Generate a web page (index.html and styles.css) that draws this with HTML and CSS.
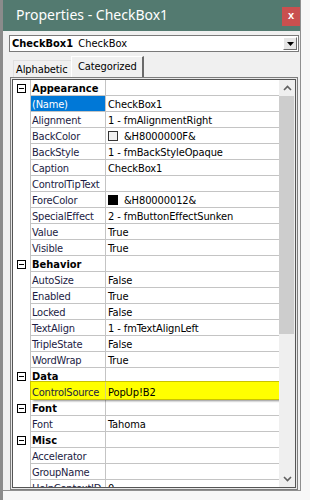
FILE: index.html
```html
<!DOCTYPE html>
<html>
<head>
<meta charset="utf-8">
<link rel="stylesheet" href="styles.css">
</head>
<body>
<div class="win">
  <div class="title">
    <span class="ttext">Properties - CheckBox1</span>
    <span class="close">x</span>
  </div>
  <div class="combo">
    <span class="cbtext"><b>CheckBox1</b> CheckBox</span>
    <span class="cbtn"><svg width="7" height="4" viewBox="0 0 7 4"><path d="M0 0H7L3.5 4Z" fill="#000"/></svg></span>
  </div>
  <div class="tabs">
    <span class="tab">Alphabetic</span>
    <span class="tab sel">Categorized</span>
  </div>
  <div class="panel">
    <div class="pin">
      <div class="grid">
        <div class="row cat"><span class="gut"><i class="minus"></i></span><span class="name">Appearance</span><span class="val"></span></div>
        <div class="row"><span class="gut"></span><span class="name selname">(Name)</span><span class="val">CheckBox1</span></div>
        <div class="row"><span class="gut"></span><span class="name">Alignment</span><span class="val">1 - fmAlignmentRight</span></div>
        <div class="row"><span class="gut"></span><span class="name">BackColor</span><span class="val"><i class="sw light"></i>&amp;H8000000F&amp;</span></div>
        <div class="row"><span class="gut"></span><span class="name">BackStyle</span><span class="val">1 - fmBackStyleOpaque</span></div>
        <div class="row"><span class="gut"></span><span class="name">Caption</span><span class="val">CheckBox1</span></div>
        <div class="row"><span class="gut"></span><span class="name">ControlTipText</span><span class="val"></span></div>
        <div class="row"><span class="gut"></span><span class="name">ForeColor</span><span class="val"><i class="sw dark"></i>&amp;H80000012&amp;</span></div>
        <div class="row"><span class="gut"></span><span class="name">SpecialEffect</span><span class="val">2 - fmButtonEffectSunken</span></div>
        <div class="row"><span class="gut"></span><span class="name">Value</span><span class="val">True</span></div>
        <div class="row"><span class="gut"></span><span class="name">Visible</span><span class="val">True</span></div>
        <div class="row cat"><span class="gut"><i class="minus"></i></span><span class="name">Behavior</span><span class="val"></span></div>
        <div class="row"><span class="gut"></span><span class="name">AutoSize</span><span class="val">False</span></div>
        <div class="row"><span class="gut"></span><span class="name">Enabled</span><span class="val">True</span></div>
        <div class="row"><span class="gut"></span><span class="name">Locked</span><span class="val">False</span></div>
        <div class="row"><span class="gut"></span><span class="name">TextAlign</span><span class="val">1 - fmTextAlignLeft</span></div>
        <div class="row"><span class="gut"></span><span class="name">TripleState</span><span class="val">False</span></div>
        <div class="row"><span class="gut"></span><span class="name">WordWrap</span><span class="val">True</span></div>
        <div class="row cat"><span class="gut"><i class="minus"></i></span><span class="name">Data</span><span class="val"></span></div>
        <div class="row"><span class="gut"></span><span class="hl"><span class="name">ControlSource</span><span class="val">PopUp!B2</span></span></div>
        <div class="row cat"><span class="gut"><i class="minus"></i></span><span class="name">Font</span><span class="val"></span></div>
        <div class="row"><span class="gut"></span><span class="name">Font</span><span class="val">Tahoma</span></div>
        <div class="row cat"><span class="gut"><i class="minus"></i></span><span class="name">Misc</span><span class="val"></span></div>
        <div class="row"><span class="gut"></span><span class="name">Accelerator</span><span class="val"></span></div>
        <div class="row"><span class="gut"></span><span class="name">GroupName</span><span class="val"></span></div>
        <div class="row"><span class="gut"></span><span class="name">HelpContextID</span><span class="val">0</span></div>
      </div>
      <div class="sb">
        <span class="sbbtn"><svg width="9" height="6" viewBox="0 0 9 6"><path d="M1 5L4.5 1.5L8 5" fill="none" stroke="#606060" stroke-width="1.6"/></svg></span>
        <span class="thumb"></span>
        <span class="sbfill"></span>
        <span class="sbbtn"><svg width="9" height="6" viewBox="0 0 9 6"><path d="M1 1L4.5 4.5L8 1" fill="none" stroke="#606060" stroke-width="1.6"/></svg></span>
      </div>
    </div>
  </div>
</div>
</body>
</html>
```
FILE: styles.css
```css
html, body {
  margin: 0;
  padding: 0;
}
body {
  background: #f7f7f7;
  border-left: 3px solid #8b8b8b;
  height: 500px;
  box-sizing: border-box;
  overflow: hidden;
  font-family: "DejaVu Sans Condensed", "Liberation Sans", sans-serif;
  font-size: 11px;
}
.win {
  width: 298px;
  height: 491px;
  box-sizing: border-box;
  background: #f0f0f0;
  border-right: 1px solid #8f8f8f;
  border-bottom: 1px solid #8f8f8f;
  display: flex;
  flex-direction: column;
}
.title {
  height: 31px;
  flex: none;
  background: #537a70;
  color: #fff;
  display: flex;
  justify-content: space-between;
  align-items: flex-start;
  padding-left: 13px;
  box-sizing: border-box;
}
.ttext {
  font-family: "Noto Sans", sans-serif;
  font-size: 14px;
  line-height: 18px;
  margin-top: 6px;
}
.close {
  width: 18px;
  height: 19px;
  margin-top: 7px;
  background: #c9504f;
  color: #fff;
  font-family: "Liberation Sans", sans-serif;
  font-weight: bold;
  font-size: 11px;
  line-height: 17px;
  text-align: center;
}
.combo {
  flex: none;
  margin: 4px 0 0 6px;
  width: 290px;
  height: 17px;
  box-sizing: border-box;
  border: 1px solid #7a7a7a;
  background: #fff;
  display: flex;
  align-items: center;
  color: #000;
}
.cbtext {
  padding-left: 2px;
  font-size: 11px;
  line-height: 15px;
}
.cbtext b {
  margin-right: 2px;
}
.cbtn {
  margin-left: auto;
  margin-right: 1px;
  width: 14px;
  height: 13px;
  box-sizing: border-box;
  background: #e6e6e6;
  border-top: 1px solid #fff;
  border-left: 1px solid #fff;
  border-right: 1px solid #6d6d6d;
  border-bottom: 1px solid #6d6d6d;
  display: flex;
  align-items: center;
  justify-content: center;
}
.tabs {
  flex: none;
  height: 25px;
  display: flex;
  align-items: flex-end;
  padding-left: 10px;
}
.tab {
  height: 17px;
  box-sizing: border-box;
  border-top: 1px solid #e0e0e0;
  border-left: 1px solid #e0e0e0;
  padding: 1px 0 0 2px;
  width: 58px;
  line-height: 15px;
  color: #000;
  letter-spacing: -0.1px;
}
.tab.sel {
  height: 21px;
  width: 73px;
  border-top: 1px solid #fff;
  border-left: 1px solid #fff;
  border-right: 2px solid #6a6a6a;
  padding: 2px 0 0 6px;
}
.panel {
  flex: none;
  margin-left: 7px;
  width: 288px;
  height: 413px;
  box-sizing: border-box;
  border: 1px solid #7d7d7d;
  padding: 1px;
  background: #e8e8e8;
}
.pin {
  height: 100%;
  box-sizing: border-box;
  border: 1px solid #555;
  background: #fff;
  display: flex;
  overflow: hidden;
}
.grid {
  width: 266px;
  flex: none;
  overflow: hidden;
}
.row {
  display: flex;
  height: 16px;
  line-height: 17px;
  color: #000;
}
.gut {
  width: 17px;
  flex: none;
  position: relative;
  display: flex;
  align-items: center;
  justify-content: center;
  border-right: 1px solid #c4c4c4;
}
.name {
  width: 75px;
  flex: none;
  box-sizing: border-box;
  padding-left: 1px;
  border-right: 1px solid #c4c4c4;
  border-bottom: 1px solid #c4c4c4;
  color: #1c1c44;
  white-space: nowrap;
  overflow: hidden;
  letter-spacing: -0.2px;
}
.val {
  flex: 1;
  padding-left: 2px;
  border-bottom: 1px solid #c4c4c4;
  white-space: nowrap;
  overflow: hidden;
  display: flex;
  align-items: flex-start;
  letter-spacing: -0.1px;
}
.cat .name {
  font-weight: bold;
  color: #000;
  letter-spacing: 0;
}
.selname {
  background: #0078d7;
  color: #fff;
}
.minus {
  width: 9px;
  height: 9px;
  box-sizing: border-box;
  border: 1px solid #000;
  position: relative;
}
.minus::after {
  content: "";
  position: absolute;
  left: 1px;
  top: 3px;
  width: 5px;
  height: 1px;
  background: #000;
}
.sw {
  width: 10px;
  height: 10px;
  box-sizing: border-box;
  border: 1px solid #000;
  margin: 3px 6px 0 0;
  flex: none;
}
.sw.light {
  background: #f0f0f0;
  border-color: #333;
}
.sw.dark {
  background: #000;
}
.hl {
  flex: 1;
  display: flex;
  position: relative;
  top: -2px;
  height: 17px;
  background: #ffff00;
  box-shadow: 0 0 0 1px #c9c200, 2px 2px 2px rgba(0, 0, 0, 0.45);
  z-index: 1;
}
.hl .name {
  border-bottom: none;
  border-right-color: #d8d27a;
  color: #1c1c44;
  line-height: 21px;
}
.hl .val {
  border-bottom: none;
  line-height: 21px;
}
.sb {
  width: 16px;
  flex: none;
  background: #efefef;
  display: flex;
  flex-direction: column;
}
.sbbtn {
  height: 16px;
  flex: none;
  display: flex;
  align-items: center;
  justify-content: center;
}
.thumb {
  height: 238px;
  flex: none;
  background: #cdcdcd;
  margin: 0 1px 0 0;
}
.sbfill {
  flex: 1;
}
```
